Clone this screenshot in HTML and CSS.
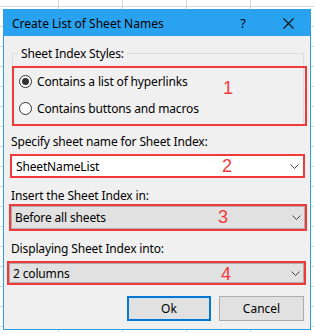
FILE: index.html
```html
<!DOCTYPE html>
<html lang="en">
<head>
    <meta charset="UTF-8">
    <meta name="viewport" content="width=device-width, initial-scale=1.0">
    <link rel="stylesheet" href="styles.css">
</head>
<body>

<div class="dialog">
    <div class="titlebar">
        <span class="title">Create List of Sheet Names</span>
        <span class="help">?</span>
        <svg class="close" width="11" height="11" viewBox="0 0 11 11">
            <path d="M0.5 0.5 L10.5 10.5 M10.5 0.5 L0.5 10.5" stroke="#111" stroke-width="1.1" fill="none"/>
        </svg>
    </div>

    <!-- Styles group -->
    <div class="group">
        <div class="group-title">Sheet Index Styles:</div>
        <div class="mark mark-1">
            <label class="radio"><span class="dot on"></span>Contains a list of hyperlinks</label>
            <label class="radio"><span class="dot"></span>Contains buttons and macros</label>
            <span class="num num-1">1</span>
        </div>
    </div>

    <div class="field-label">Specify sheet name for Sheet Index:</div>
    <div class="mark mark-2">
        <div class="combo combo-edit">
            <span>SheetNameList</span>
            <svg class="chevron" width="9" height="5" viewBox="0 0 9 5"><path d="M0.5 0.5 L4.5 4.5 L8.5 0.5" stroke="#444" fill="none"/></svg>
        </div>
        <span class="num num-2">2</span>
    </div>

    <div class="field-label">Insert the Sheet Index in:</div>
    <div class="mark mark-3">
        <div class="combo">
            <span>Before all sheets</span>
            <svg class="chevron" width="9" height="5" viewBox="0 0 9 5"><path d="M0.5 0.5 L4.5 4.5 L8.5 0.5" stroke="#444" fill="none"/></svg>
        </div>
        <span class="num num-3">3</span>
    </div>

    <div class="field-label">Displaying Sheet Index into:</div>
    <div class="mark mark-4">
        <div class="combo">
            <span>2 columns</span>
            <svg class="chevron" width="9" height="5" viewBox="0 0 9 5"><path d="M0.5 0.5 L4.5 4.5 L8.5 0.5" stroke="#444" fill="none"/></svg>
        </div>
        <span class="num num-4">4</span>
    </div>

    <div class="buttons">
        <button class="btn btn-ok">Ok</button>
        <button class="btn">Cancel</button>
    </div>
</div>

</body>
</html>
```

FILE: styles.css
```css
html, body {
    margin: 0;
    padding: 0;
}

body {
    width: 314px;
    height: 332px;
    overflow: hidden;
    font-family: "Noto Sans", "Liberation Sans", sans-serif;
    font-size: 12px;
    color: #000;
    background-color: #fff;
    /* excel grid behind the dialog */
    background-image:
        linear-gradient(to right, #d9d9d9 1px, transparent 1px),
        linear-gradient(to bottom, #d9d9d9 1px, transparent 1px);
    background-size: 64px 100%, 100% 20px;
    background-position: 58px 0, 0 6px;
}

.dialog {
    box-sizing: border-box;
    width: 308px;
    height: 321px;
    margin: 9px 0 0 3px;
    border: 1px solid #2b9fe8;
    background: #f0f0f0;
    letter-spacing: -0.15px;
}

.titlebar {
    height: 26px;
    display: flex;
    align-items: center;
    padding-left: 8px;
    background: #29a3f0;
    letter-spacing: 0;
}
.title {
    flex: 1;
}
.help {
    font-size: 13px;
    margin-right: 37px;
}
.close {
    margin-right: 16px;
}

.group {
    margin: 17px 6px 0 8px;
    border: 1px solid #dcdcdc;
}
.group-title {
    width: fit-content;
    height: 16px;
    line-height: 16px;
    margin: -8px 0 0 5px;
    padding: 0 3px;
    background: #f0f0f0;
}

.mark {
    position: relative;
    box-sizing: border-box;
    border: 2px solid #f03a3a;
}
.mark-1 {
    margin: 4px -4px -1px -1px;
    padding-bottom: 2px;
}
.mark-2 {
    width: 295px;
    height: 24px;
    margin: 4px 0 0 6px;
}
.mark-3 {
    width: 298px;
    height: 27px;
    margin: 0 0 0 5px;
}
.mark-4 {
    width: 299px;
    height: 24px;
    margin: 4px 0 0 3px;
}

.radio {
    display: flex;
    align-items: center;
    height: 27px;
    padding-left: 5px;
}
.dot {
    box-sizing: border-box;
    width: 13px;
    height: 13px;
    margin-right: 5px;
    border: 1px solid #333;
    border-radius: 50%;
    background: #fff;
    display: flex;
    align-items: center;
    justify-content: center;
}
.dot.on::after {
    content: "";
    width: 7px;
    height: 7px;
    border-radius: 50%;
    background: #333;
}

.field-label {
    line-height: 16px;
    margin: 10px 0 0 7px;
}
.group + .field-label {
    margin-top: 8px;
}

.combo {
    box-sizing: border-box;
    height: 100%;
    display: flex;
    align-items: center;
    padding-left: 3px;
    border: 1px solid #adadad;
    background: #e1e1e1;
}
.combo-edit {
    border-color: #fff;
    background: #fff;
}
.chevron {
    margin-left: auto;
    margin-right: 3px;
}

.num {
    position: absolute;
    font-family: "Liberation Sans", sans-serif;
    font-size: 18px;
    line-height: 1;
    color: #f03a3a;
}
.num-1 { left: 209px; top: 11px; }
.num-2 { left: 210px; top: 1px; }
.num-3 { left: 207px; top: 2px; }
.num-4 { left: 212px; top: 2px; }

.buttons {
    display: flex;
    justify-content: flex-end;
    gap: 8px;
    margin: 11px 6px 0 0;
}
.btn {
    box-sizing: border-box;
    width: 85px;
    height: 25px;
    padding: 0;
    font-family: inherit;
    font-size: 12px;
    color: #000;
    background: #e1e1e1;
    border: 1px solid #adadad;
}
.btn-ok {
    width: 84px;
    border: 2px solid #0078d7;
}
```
